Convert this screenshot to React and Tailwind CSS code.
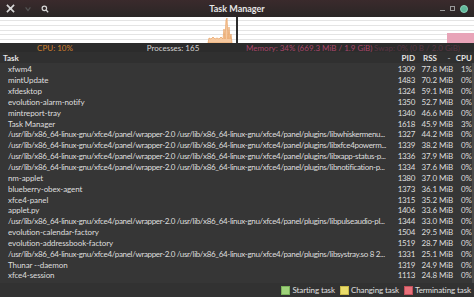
import React from "react";

const W = "/usr/lib/x86_64-linux-gnu/xfce4/panel/wrapper-2.0 /usr/lib/x86_64-linux-gnu/xfce4/panel/plugins/";
const rows = [
  ["xfwm4", "1309", "77.8 MiB", "1%"],
  ["mintUpdate", "1483", "70.2 MiB", "0%"],
  ["xfdesktop", "1324", "59.1 MiB", "0%"],
  ["evolution-alarm-notify", "1350", "52.7 MiB", "0%"],
  ["mintreport-tray", "1340", "46.6 MiB", "0%"],
  ["Task Manager", "1618", "45.9 MiB", "3%"],
  [W + "libwhiskermenu...", "1327", "44.2 MiB", "0%", 1],
  [W + "libxfce4powerm...", "1339", "38.2 MiB", "0%", 1],
  [W + "libxapp-status-p...", "1336", "37.9 MiB", "0%", 1],
  [W + "libnotification-p...", "1334", "37.6 MiB", "0%", 1],
  ["nm-applet", "1380", "37.0 MiB", "0%"],
  ["blueberry-obex-agent", "1373", "36.1 MiB", "0%"],
  ["xfce4-panel", "1315", "35.2 MiB", "0%"],
  ["applet.py", "1406", "33.6 MiB", "0%"],
  [W + "libpulseaudio-pl...", "1344", "33.0 MiB", "0%", 1],
  ["evolution-calendar-factory", "1504", "29.5 MiB", "0%"],
  ["evolution-addressbook-factory", "1519", "28.7 MiB", "0%"],
  [W + "libsystray.so 8 2...", "1331", "25.1 MiB", "0%", 1],
  ["Thunar --daemon", "1319", "24.9 MiB", "0%"],
  ["xfce4-session", "1113", "24.8 MiB", "0%"],
  ["xfsettingsd", "1418", "24.1 MiB", "0%"],
];

function Grid() {
  return (
    <div className="absolute inset-0 flex flex-col justify-between py-[3px]">
      {[0, 1, 2, 3, 4].map((i) => (
        <div key={i} className="h-px bg-[#e4e4e4]" />
      ))}
    </div>
  );
}

export default function App() {
  return (
    <div
      className="w-[474px] h-[297px] overflow-hidden bg-[#363636] text-[#dedede] flex flex-col"
      style={{ fontFamily: 'Lato, "Noto Sans", sans-serif' }}
    >
      {/* Title bar */}
      <div className="h-[17px] shrink-0 bg-gradient-to-b from-[#3a2a2c] to-[#2a2626] flex items-center px-[6px] relative">
        <div className="flex items-center gap-[9px]">
          <svg width="9" height="9" viewBox="0 0 10 10">
            <path d="M1 1 L9 9 M9 1 L1 9" stroke="#d8d8d8" strokeWidth="1.8" />
            <circle cx="5" cy="5" r="1.8" fill="#d8d8d8" />
          </svg>
          <svg width="8" height="8" viewBox="0 0 10 10">
            <path d="M2 3 L5 7 L8 3" stroke="#555" strokeWidth="1.5" fill="none" />
          </svg>
          <svg width="8" height="8" viewBox="0 0 10 10">
            <circle cx="4.2" cy="4.2" r="2.8" stroke="#d8d8d8" strokeWidth="1.5" fill="none" />
            <path d="M6.3 6.3 L9 9" stroke="#d8d8d8" strokeWidth="1.6" />
          </svg>
        </div>
        <div className="absolute inset-0 flex items-center justify-center text-[9px] font-bold text-[#e6e6e6]">
          Task Manager
        </div>
        <div className="ml-auto flex items-center gap-[5px]">
          <div className="w-[5px] h-px bg-[#9a9a9a] mt-[3px]" />
          <div className="w-[5px] h-[5px] border border-[#9a9a9a]" />
          <div className="w-[8px] h-[8px] rounded-full bg-[#5fb89a] border border-[#8ad0b8]" />
        </div>
      </div>

      {/* Graphs */}
      <div className="h-[26px] shrink-0 flex bg-[#2e2e2e] gap-[2px]">
        <div className="flex-1 bg-white relative">
          <Grid />
          <svg className="absolute inset-0" width="236" height="26" viewBox="0 0 236 26" preserveAspectRatio="none">
            <path
              d="M208 26 L209 21 L211 22 L213 20 L215 22 L217 21 L219 22 L221 20 L223 22 L224 12 L225 22 L226 3 L227 1 L228 22 L229 10 L230 22 L231 17 L232 26 Z"
              fill="#f6c9a0"
              stroke="#e8a060"
              strokeWidth="0.7"
            />
          </svg>
        </div>
        <div className="flex-1 bg-white relative">
          <Grid />
          <div className="absolute right-0 bottom-0 w-[27px] h-[10px] bg-[#e8a4b8]" />
        </div>
      </div>

      {/* Stats */}
      <div className="h-[9px] shrink-0 bg-[#2c2c2c] flex items-center text-[8px] leading-none whitespace-nowrap">
        <div className="w-[110px] text-center text-[#d0802e]">CPU: 10%</div>
        <div className="w-[126px] text-center text-[#d4d4d4]">Processes: 165</div>
        <div className="w-[134px] pl-[10px] text-[#a8466a]">Memory: 34% (669.3 MiB / 1.9 GiB)</div>
        <div className="flex-1 pl-[4px] text-[#5a3644]">Swap: 0% (0 B / 2.0 GiB)</div>
      </div>

      {/* Header */}
      <div className="h-[11px] shrink-0 bg-[#303030] flex items-center text-[8px] font-bold text-[#e4e4e4] pr-[2px] whitespace-nowrap">
        <div className="flex-1 pl-[3px]">Task</div>
        <div className="w-[22px] text-right">PID</div>
        <div className="w-[29px] pl-[8px]">RSS</div>
        <div className="w-[10px] text-center text-[#aaa]">-</div>
        <div className="w-[18px] text-right">CPU</div>
      </div>

      {/* Rows */}
      <div className="flex-1 flex min-h-0 overflow-hidden">
        <div className="flex-1 flex flex-col min-w-0 pt-[1px]">
          {rows.map((r, i) => (
            <div key={i} className="h-[10.85px] shrink-0 flex items-center text-[8px] leading-none whitespace-nowrap">
              <div
                className={
                  r[4]
                    ? "flex-1 min-w-0 pl-[8px] pr-[2px] overflow-hidden tracking-[-0.33px]"
                    : "flex-1 min-w-0 pl-[8px] pr-[2px] overflow-hidden tracking-[-0.1px]"
                }
              >
                {r[0]}
              </div>
              <div className="w-[19px] text-right tracking-[-0.3px]">{r[1]}</div>
              <div className="w-[38px] text-right tracking-[-0.1px]">{r[2]}</div>
              <div className="w-[19px] text-right">{r[3]}</div>
            </div>
          ))}
        </div>
        <div className="w-[2px] bg-[#4a4a4a]" />
      </div>

      {/* Footer legend */}
      <div className="h-[14px] shrink-0 bg-[#323232] flex items-center justify-end gap-[5px] pr-[3px] text-[8px] tracking-[-0.1px] text-[#e0e0e0] whitespace-nowrap">
        <div className="flex items-center gap-[2px]">
          <div className="w-[9px] h-[9px] bg-[#9ed27a] border border-[#7ab05a]" />
          <span>Starting task</span>
        </div>
        <div className="flex items-center gap-[2px]">
          <div className="w-[9px] h-[9px] bg-[#eadc6a] border border-[#c8b848]" />
          <span>Changing task</span>
        </div>
        <div className="flex items-center gap-[2px]">
          <div className="w-[9px] h-[9px] bg-[#e8707a] border border-[#c0505a]" />
          <span>Terminating task</span>
        </div>
      </div>
    </div>
  );
}
